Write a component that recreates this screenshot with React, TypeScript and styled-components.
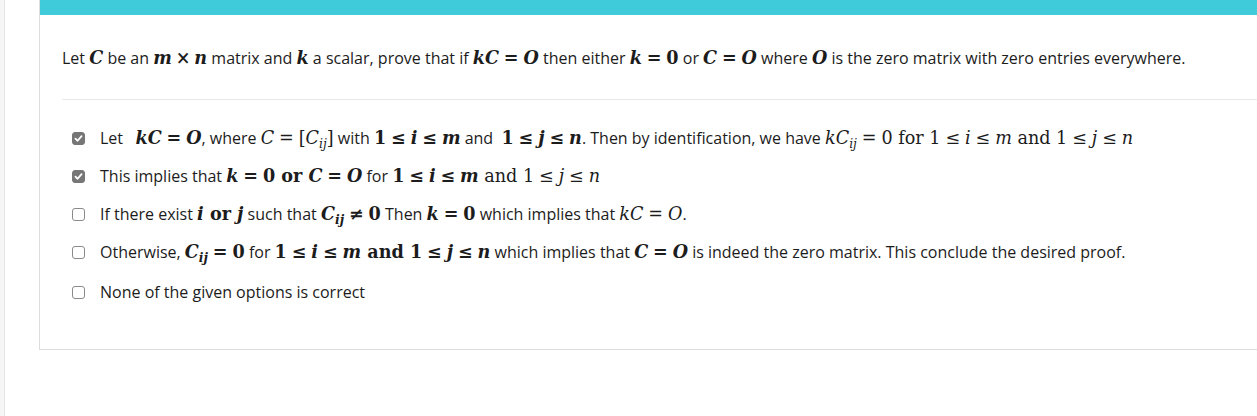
import React from "react";
import styled, { createGlobalStyle, css } from "styled-components";

const GlobalStyle = createGlobalStyle`
  html, body { margin: 0; padding: 0; background: #ffffff; }
  body {
    font-family: "Open Sans", "Noto Sans", "Liberation Sans", sans-serif;
    color: #1c1c1c;
    -webkit-font-smoothing: antialiased;
  }
`;

const Page = styled.div`
  display: flex;
  align-items: flex-start;
  width: 100%;
  height: 416px;
  overflow: hidden;
`;

const Rail = styled.div`
  flex: none;
  width: 4px;
  height: 100%;
  background: #f6f6f6;
  border-right: 1px solid #e6e6e6;
`;

const Card = styled.section`
  flex: none;
  width: 1320px;
  margin-left: 34px;
  background: #ffffff;
  border-left: 1px solid #dcdcdc;
  border-bottom: 1px solid #dcdcdc;
  padding-bottom: 36px;
`;

const TopBar = styled.div`
  height: 15px;
  background: #40cbdb;
`;

const Question = styled.p`
  margin: 31px 0 29px 22px;
  font-size: 16px;
  line-height: 24px;
  white-space: nowrap;
`;

const Divider = styled.hr`
  margin: 0 0 0 22px;
  border: none;
  border-top: 1px solid #e8e8e8;
`;

const OptionList = styled.ul`
  list-style: none;
  margin: 0;
  padding: 19px 0 0 32px;
`;

const OptionRow = styled.li`
  display: flex;
  align-items: center;
  gap: 15px;
  height: 38px;
  &:last-child { height: 42px; }
`;

const Checkbox = styled.span<{ $checked?: boolean }>`
  flex: none;
  box-sizing: border-box;
  width: 13px;
  height: 13px;
  border-radius: 3px;
  display: flex;
  align-items: center;
  justify-content: center;
  ${(p) =>
    p.$checked
      ? css`
          background: #767676;
          border: 1px solid #767676;
        `
      : css`
          background: #ffffff;
          border: 1.5px solid #8a8a8a;
        `}
`;

const OptionText = styled.span`
  font-size: 16px;
  line-height: 24px;
  white-space: nowrap;
`;

/* math pieces */
const M = styled.span<{ $b?: boolean }>`
  font-family: "DejaVu Serif", "Liberation Serif", serif;
  font-size: 1.1em;
  font-weight: ${(p) => (p.$b ? 700 : 400)};
  white-space: nowrap;
`;

const V = styled.i`
  font-style: italic;
`;

const Rel = styled.span`
  margin: 0 0.2778em;
`;

const Bin = styled.span`
  margin: 0 0.2222em;
`;

const T = styled.span`
  font-style: normal;
`;

const Sub = styled.sub`
  font-size: 0.7em;
  font-style: italic;
  vertical-align: -0.3em;
  line-height: 0;
`;

const CheckMark = () => (
  <svg width="9" height="9" viewBox="0 0 10 10" aria-hidden>
    <path d="M1.6 5.2 L4 7.5 L8.4 2.4" fill="none" stroke="#ffffff" strokeWidth="2" strokeLinecap="round" strokeLinejoin="round" />
  </svg>
);

const Cij = () => (
  <>
    <V>C</V>
    <Sub>ij</Sub>
  </>
);

const Range = ({ v, max }: { v: string; max: string }) => (
  <>
    1<Rel>≤</Rel>
    <V>{v}</V>
    <Rel>≤</Rel>
    <V>{max}</V>
  </>
);

type Opt = { checked: boolean; content: React.ReactNode };

const options: Opt[] = [
  {
    checked: true,
    content: (
      <>
        Let&nbsp;&nbsp;{" "}
        <M $b>
          <V>kC</V>
          <Rel>=</Rel>
          <V>O</V>
        </M>
        , where{" "}
        <M>
          <V>C</V>
          <Rel>=</Rel>[<Cij />]
        </M>{" "}
        with{" "}
        <M $b>
          <Range v="i" max="m" />
        </M>{" "}
        and&nbsp;{" "}
        <M $b>
          <Range v="j" max="n" />
        </M>
        . Then by identification, we have{" "}
        <M>
          <V>k</V>
          <Cij />
          <Rel>=</Rel>0 <T>for</T> <Range v="i" max="m" /> <T>and</T> <Range v="j" max="n" />
        </M>
      </>
    ),
  },
  {
    checked: true,
    content: (
      <>
        This implies that{" "}
        <M $b>
          <V>k</V>
          <Rel>=</Rel>0 <T>or</T> <V>C</V>
          <Rel>=</Rel>
          <V>O</V>
        </M>{" "}
        for{" "}
        <M $b>
          <Range v="i" max="m" />
        </M>
        <M>
          {" "}
          <T>and</T> <Range v="j" max="n" />
        </M>
      </>
    ),
  },
  {
    checked: false,
    content: (
      <>
        If there exist{" "}
        <M $b>
          <V>i</V> <T>or</T> <V>j</V>
        </M>{" "}
        such that{" "}
        <M $b>
          <Cij />
          <Rel>≠</Rel>0
        </M>{" "}
        Then{" "}
        <M $b>
          <V>k</V>
          <Rel>=</Rel>0
        </M>{" "}
        which implies that{" "}
        <M>
          <V>kC</V>
          <Rel>=</Rel>
          <V>O</V>
        </M>
        .
      </>
    ),
  },
  {
    checked: false,
    content: (
      <>
        Otherwise,{" "}
        <M $b>
          <Cij />
          <Rel>=</Rel>0
        </M>{" "}
        for{" "}
        <M $b>
          <Range v="i" max="m" /> <T>and</T> <Range v="j" max="n" />
        </M>{" "}
        which implies that{" "}
        <M $b>
          <V>C</V>
          <Rel>=</Rel>
          <V>O</V>
        </M>{" "}
        is indeed the zero matrix. This conclude the desired proof.
      </>
    ),
  },
  { checked: false, content: <>None of the given options is correct</> },
];

export default function App() {
  return (
    <>
      <GlobalStyle />
      <Page>
        <Rail />
        <Card>
          <TopBar />
          <Question>
            Let{" "}
            <M $b>
              <V>C</V>
            </M>{" "}
            be an{" "}
            <M $b>
              <V>m</V>
              <Bin>×</Bin>
              <V>n</V>
            </M>{" "}
            matrix and{" "}
            <M $b>
              <V>k</V>
            </M>{" "}
            a scalar, prove that if{" "}
            <M $b>
              <V>kC</V>
              <Rel>=</Rel>
              <V>O</V>
            </M>{" "}
            then either{" "}
            <M $b>
              <V>k</V>
              <Rel>=</Rel>0
            </M>{" "}
            or{" "}
            <M $b>
              <V>C</V>
              <Rel>=</Rel>
              <V>O</V>
            </M>{" "}
            where{" "}
            <M $b>
              <V>O</V>
            </M>{" "}
            is the zero matrix with zero entries everywhere.
          </Question>
          <Divider />
          <OptionList>
            {options.map((o, i) => (
              <OptionRow key={i}>
                <Checkbox $checked={o.checked}>{o.checked && <CheckMark />}</Checkbox>
                <OptionText>{o.content}</OptionText>
              </OptionRow>
            ))}
          </OptionList>
        </Card>
      </Page>
    </>
  );
}
